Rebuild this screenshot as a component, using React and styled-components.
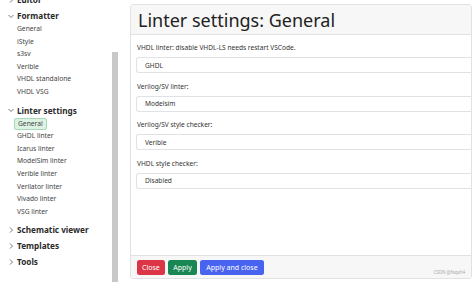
import styled, { createGlobalStyle } from "styled-components"

const Global = createGlobalStyle`
  html, body {
    margin: 0;
    padding: 0;
    background: #ffffff;
  }
  body {
    font-family: "Noto Sans", "Open Sans", sans-serif;
    color: #212529;
    overflow: hidden;
  }
`

const Page = styled.div`
  display: flex;
  width: 474px;
  height: 282px;
  overflow: hidden;
`

const Sidebar = styled.nav`
  width: 112px;
  flex-shrink: 0;
  display: flex;
  flex-direction: column;
  margin-top: -7px;
`

const Section = styled.div`
  display: flex;
  flex-direction: column;
  margin-bottom: ${({ open }) => (open ? "5px" : "3px")};
`

const SectionHead = styled.div`
  display: flex;
  align-items: center;
  height: 13px;
  padding-left: 8px;
  gap: 3px;
  font-size: 8.2px;
  font-weight: 700;
  color: #2a2a2a;
`

const Items = styled.div`
  display: flex;
  flex-direction: column;
  padding-left: 14px;
  padding-top: 1px;
`

const Item = styled.div`
  align-self: flex-start;
  height: 12.6px;
  line-height: 12.6px;
  font-size: 6.7px;
  color: #444;
  padding: 0 3px;
  box-sizing: border-box;
  ${({ active }) =>
    active
      ? `background: #dcf3e3; border: 1px solid #a9d8b8; border-radius: 2px; line-height: 10.6px;`
      : ``}
`

const Scrollbar = styled.div`
  width: 6px;
  margin-top: 52px;
  background: #c8c8c8;
  flex-shrink: 0;
`

const Card = styled.div`
  margin: 4px 2px 3px 12px;
  flex: 1;
  display: flex;
  flex-direction: column;
  border: 1px solid #e2e2e2;
  border-radius: 3px;
  overflow: hidden;
`

const Header = styled.div`
  height: 29px;
  background: #f7f7f7;
  border-bottom: 1px solid #e2e2e2;
  display: flex;
  align-items: center;
  padding-left: 7px;
  font-size: 18px;
  color: #222;
`

const Body = styled.div`
  flex: 1;
  padding: 7px 0 0 5px;
  display: flex;
  flex-direction: column;
  gap: 7.5px;
`

const Field = styled.div`
  display: flex;
  flex-direction: column;
`

const Label = styled.div`
  height: 12px;
  line-height: 12px;
  margin-bottom: 3px;
  padding-left: 1px;
  font-size: 6.6px;
  color: #333;
`

const Select = styled.div`
  height: 16px;
  box-sizing: border-box;
  border: 1px solid #e0e3e6;
  border-right: none;
  border-radius: 3px 0 0 3px;
  padding-left: 8px;
  display: flex;
  align-items: center;
  font-size: 6.6px;
  color: #333;
`

const Footer = styled.div`
  height: 22px;
  background: #f7f7f7;
  border-top: 1px solid #e2e2e2;
  display: flex;
  align-items: center;
  gap: 3.5px;
  padding: 0 6px;
`

const Button = styled.div`
  height: 15px;
  padding: 0 ${({ pad }) => pad || 5}px;
  border-radius: 2.5px;
  background: ${({ bg }) => bg};
  color: #fff;
  font-size: 7px;
  display: flex;
  align-items: center;
`

const Watermark = styled.div`
  margin-left: auto;
  align-self: flex-end;
  margin-bottom: 3px;
  font-size: 4.5px;
  color: #aaa;
`

const Chevron = ({ open }) =>
  open ? (
    <svg width="6" height="6" viewBox="0 0 6 6">
      <polyline points="0.5,2 3,4.5 5.5,2" fill="none" stroke="#555" strokeWidth="0.8" />
    </svg>
  ) : (
    <svg width="6" height="6" viewBox="0 0 6 6">
      <polyline points="2,0.5 4.5,3 2,5.5" fill="none" stroke="#555" strokeWidth="0.8" />
    </svg>
  )

const tree = [
  { title: "Editor", open: false },
  {
    title: "Formatter",
    open: true,
    items: ["General", "iStyle", "s3sv", "Verible", "VHDL standalone", "VHDL VSG"],
  },
  {
    title: "Linter settings",
    open: true,
    active: 0,
    items: [
      "General",
      "GHDL linter",
      "Icarus linter",
      "ModelSim linter",
      "Verible linter",
      "Verilator linter",
      "Vivado linter",
      "VSG linter",
    ],
  },
  { title: "Schematic viewer", open: false },
  { title: "Templates", open: false },
  { title: "Tools", open: false },
]

const fields = [
  { label: "VHDL linter: disable VHDL-LS needs restart VSCode.", value: "GHDL" },
  { label: "Verilog/SV linter:", value: "Modelsim" },
  { label: "Verilog/SV style checker:", value: "Verible" },
  { label: "VHDL style checker:", value: "Disabled" },
]

export default function App() {
  return (
    <Page>
      <Global />
      <Sidebar>
        {tree.map((s) => (
          <Section key={s.title} open={s.open}>
            <SectionHead>
              <Chevron open={s.open} />
              {s.title}
            </SectionHead>
            {s.items && (
              <Items>
                {s.items.map((it, i) => (
                  <Item key={it} active={s.active === i}>
                    {it}
                  </Item>
                ))}
              </Items>
            )}
          </Section>
        ))}
      </Sidebar>
      <Scrollbar />
      <Card>
        <Header>Linter settings: General</Header>
        <Body>
          {fields.map((f) => (
            <Field key={f.label}>
              <Label>{f.label}</Label>
              <Select>{f.value}</Select>
            </Field>
          ))}
        </Body>
        <Footer>
          <Button bg="#dc3545">Close</Button>
          <Button bg="#198754">Apply</Button>
          <Button bg="#4763f0" pad={6}>Apply and close</Button>
          <Watermark>CSDN @faqsh4</Watermark>
        </Footer>
      </Card>
    </Page>
  )
}
